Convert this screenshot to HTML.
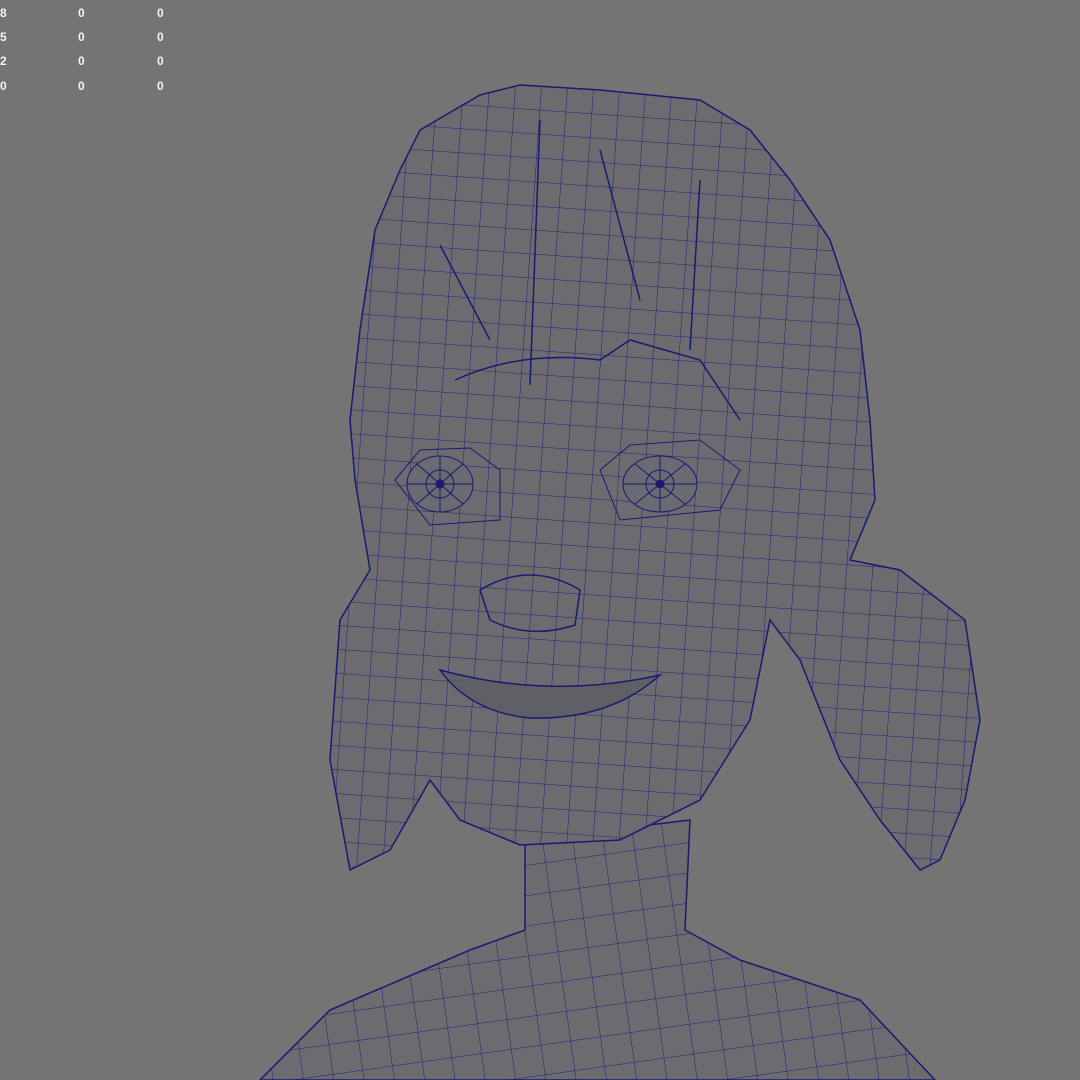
<!DOCTYPE html>
<html><head><style>
html,body{margin:0;padding:0;background:#747474;width:1080px;height:1080px;overflow:hidden}
.t{position:absolute;color:#f4f4f4;font:bold 12px "Liberation Sans",sans-serif}
</style></head><body>
<div class="t" style="left:0;top:6px">8</div><div class="t" style="left:78px;top:6px">0</div><div class="t" style="left:157px;top:6px">0</div>
<div class="t" style="left:0;top:30px">5</div><div class="t" style="left:78px;top:30px">0</div><div class="t" style="left:157px;top:30px">0</div>
<div class="t" style="left:0;top:54px">2</div><div class="t" style="left:78px;top:54px">0</div><div class="t" style="left:157px;top:54px">0</div>
<div class="t" style="left:0;top:79px">0</div><div class="t" style="left:78px;top:79px">0</div><div class="t" style="left:157px;top:79px">0</div>
<svg width="1080" height="1080" style="position:absolute;left:0;top:0">
<defs>
<pattern id="g" width="26" height="24" patternUnits="userSpaceOnUse" patternTransform="rotate(4)">
<rect width="26" height="24" fill="#6c6c70"/>
<path d="M0 0H26M0 0V24" stroke="#1f1f78" stroke-width="1"/>
</pattern>
<pattern id="g2" width="30" height="30" patternUnits="userSpaceOnUse" patternTransform="rotate(-8)">
<rect width="30" height="30" fill="#6c6c70"/>
<path d="M0 0H30M0 0V30" stroke="#1f1f78" stroke-width="1"/>
</pattern>
</defs>
<g stroke="#1a1a70" stroke-width="1.5">
<path d="M260 1080 L330 1010 L470 950 L525 930 L525 840 L690 820 L685 930 L740 960 L860 1000 L935 1080Z" fill="url(#g2)"/>
<path d="M420 130 L480 95 L520 85 L600 90 L700 100 L750 130 L790 180 L830 240 L860 330 L870 420 L875 500 L850 560 L900 570 L965 620 L980 720 L965 800 L940 860 L920 870 L880 820 L840 760 L800 660 L770 620 L750 720 L700 800 L620 840 L520 845 L460 820 L430 780 L390 850 L350 870 L330 760 L340 620 L370 570 L355 480 L350 420 L360 330 L375 230 L400 170Z" fill="url(#g)"/>
<path d="M440 670 Q550 700 660 675 Q610 720 530 718 Q470 712 440 670Z" fill="#5f5f66"/>
<path d="M455 380 Q520 350 600 360 L630 340 L700 360 L740 420" fill="none"/>
<path d="M480 590 Q530 560 580 590 L575 625 Q530 640 490 620Z" fill="none"/>
<path d="M440 245 L490 340 M540 120 L530 385 M600 150 L640 300 M700 180 L690 350" fill="none"/>
</g>
<g stroke="#1a1a70" stroke-width="1" fill="none">
<ellipse cx="440" cy="484" rx="33" ry="28" fill="#6a6a72"/>
<ellipse cx="660" cy="484" rx="37" ry="28" fill="#6a6a72"/>
<path d="M407 484H473M440 456V512M417 464L463 504M463 464L417 504M623 484H697M660 456V512M635 464L685 504M685 464L635 504"/>
<circle cx="440" cy="484" r="14"/><circle cx="660" cy="484" r="14"/>
<circle cx="440" cy="484" r="4" fill="#1a1a70"/><circle cx="660" cy="484" r="4" fill="#1a1a70"/>
<path d="M395 480 L420 450 L470 448 L500 470 L500 520 L430 525 Z"/>
<path d="M600 470 L630 445 L700 440 L740 470 L720 510 L620 520 Z"/>
</g>
</svg>
</body></html>
